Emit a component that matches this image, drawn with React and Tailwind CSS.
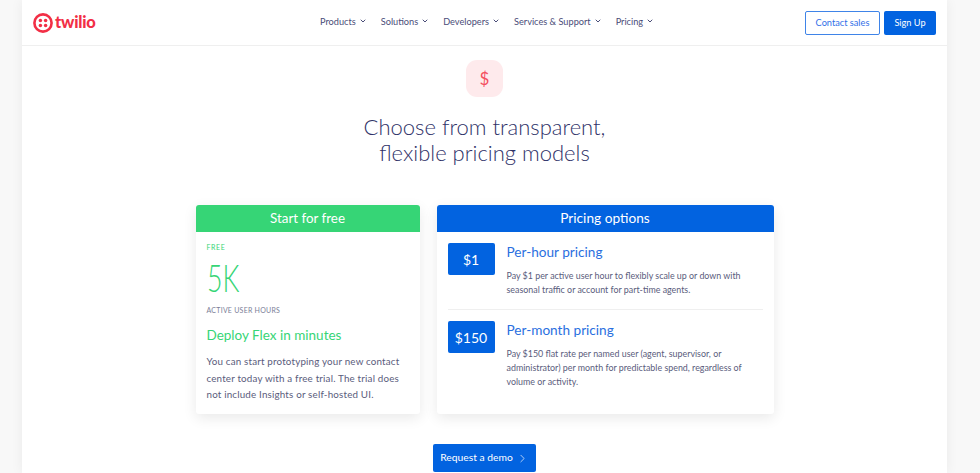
import React from 'react';
import { ChevronDown, ChevronRight } from 'lucide-react';

const navItems = ['Products', 'Solutions', 'Developers', 'Services & Support', 'Pricing'];

const TwilioLogo = () => (
  <svg width="20" height="20" viewBox="0 0 20 20" className="shrink-0">
    <circle cx="10" cy="10" r="8.6" fill="none" stroke="#f22f46" strokeWidth="2.6" />
    <circle cx="7.4" cy="7.4" r="1.75" fill="#f22f46" />
    <circle cx="12.6" cy="7.4" r="1.75" fill="#f22f46" />
    <circle cx="7.4" cy="12.6" r="1.75" fill="#f22f46" />
    <circle cx="12.6" cy="12.6" r="1.75" fill="#f22f46" />
  </svg>
);

const PriceOption = ({ price, title, lines, className }) => (
  <div className={`flex ${className}`}>
    <div className="w-[47px] h-[32px] shrink-0 bg-[#0263e0] rounded-[2px] flex items-center justify-center text-white text-[14px]">{price}</div>
    <div className="ml-[12px]">
      <h3 className="text-[13.6px] leading-[18px] text-[#2a6fe0]">{title}</h3>
      <div className="mt-[8px] text-[8.9px] leading-[14px] text-[#5a5c7c]">
        {lines.map((line) => <p key={line} className="whitespace-nowrap">{line}</p>)}
      </div>
    </div>
  </div>
);

export default function App() {
  return (
    <div className="h-[473px] overflow-hidden bg-[#f8f8f8] font-['Lato','Liberation_Sans',sans-serif]">
      <div className="mx-[22px] w-[925px] h-[473px] bg-white overflow-hidden shadow-[0_0_12px_rgba(0,0,0,0.06)]">
        <header className="h-[46px] border-b border-[#efefef] flex items-center px-[11px]">
          <div className="flex items-center w-[287px]">
            <TwilioLogo />
            <span className="ml-[2px] text-[16.5px] font-black text-[#f22f46] leading-none tracking-[-0.2px]">twilio</span>
          </div>
          <nav className="flex items-center -mt-[2px]">
            {navItems.map((item) => (
              <span key={item} className="flex items-center mr-[14px] text-[9.2px] text-[#4a4d78] whitespace-nowrap">
                {item}
                <ChevronDown size={8} strokeWidth={3} className="ml-[3px]" />
              </span>
            ))}
          </nav>
          <div className="ml-auto flex items-center gap-[4px]">
            <button className="w-[75px] h-[24px] border border-[#3f84e8] rounded-[2px] text-[9.2px] text-[#2f6fe8]">Contact sales</button>
            <button className="w-[52px] h-[24px] bg-[#0263e0] rounded-[2px] text-[9.2px] text-white">Sign Up</button>
          </div>
        </header>

        <main className="flex flex-col items-center">
          <div className="mt-[14px] w-[37px] h-[37px] rounded-[11px] bg-[#feeaec] flex items-center justify-center text-[17px] text-[#f4505f]">$</div>
          <h1 className="mt-[17px] text-center text-[22px] leading-[26px] font-light text-[#2f3268]">
            Choose from transparent,<br />flexible pricing models
          </h1>

          <div className="mt-[39px] flex items-start gap-[17px]">
            <section className="w-[224px] h-[209px] rounded-[3px] bg-white shadow-[0_4px_14px_rgba(0,0,0,0.09)] overflow-hidden">
              <div className="h-[27px] bg-[#36d576] text-white text-[13.4px] flex items-center justify-center">Start for free</div>
              <div className="pl-[11px] pt-[10px]">
                <p className="text-[7px] leading-[10px] tracking-[0.6px] text-[#36d576]">FREE</p>
                <p className="mt-[6px] text-[37px] leading-[40px] font-light text-[#36d576] origin-left scale-x-[0.72]">5K</p>
                <p className="mt-[7px] text-[7px] leading-[10px] tracking-[0.25px] text-[#7b7e98]">ACTIVE USER HOURS</p>
                <h3 className="mt-[11px] text-[13.5px] leading-[18px] text-[#36d576]">Deploy Flex in minutes</h3>
                <div className="mt-[9px] text-[9.8px] leading-[16.5px] tracking-[0.18px] text-[#5a5c7c]">
                  <p className="whitespace-nowrap">You can start prototyping your new contact</p>
                  <p className="whitespace-nowrap">center today with a free trial. The trial does</p>
                  <p className="whitespace-nowrap">not include Insights or self-hosted UI.</p>
                </div>
              </div>
            </section>

            <section className="w-[337px] h-[209px] rounded-[3px] bg-white shadow-[0_4px_14px_rgba(0,0,0,0.09)] overflow-hidden">
              <div className="h-[27px] bg-[#0263e0] text-white text-[13.7px] flex items-center justify-center">Pricing options</div>
              <div className="px-[11px] pt-[11px]">
                <PriceOption price="$1" title="Per-hour pricing" className="pb-[12px] border-b border-[#efefef]" lines={['Pay $1 per active user hour to flexibly scale up or down with', 'seasonal traffic or account for part-time agents.']} />
                <PriceOption price="$150" title="Per-month pricing" className="pt-[11px]" lines={['Pay $150 flat rate per named user (agent, supervisor, or', 'administrator) per month for predictable spend, regardless of', 'volume or activity.']} />
              </div>
            </section>
          </div>

          <button className="mt-[30px] w-[103px] h-[28px] bg-[#0263e0] rounded-[2px] text-white text-[10.3px] flex items-center justify-center gap-[3px]">
            Request a demo <ChevronRight size={13} strokeWidth={1.25} />
          </button>
        </main>
      </div>
    </div>
  );
}
